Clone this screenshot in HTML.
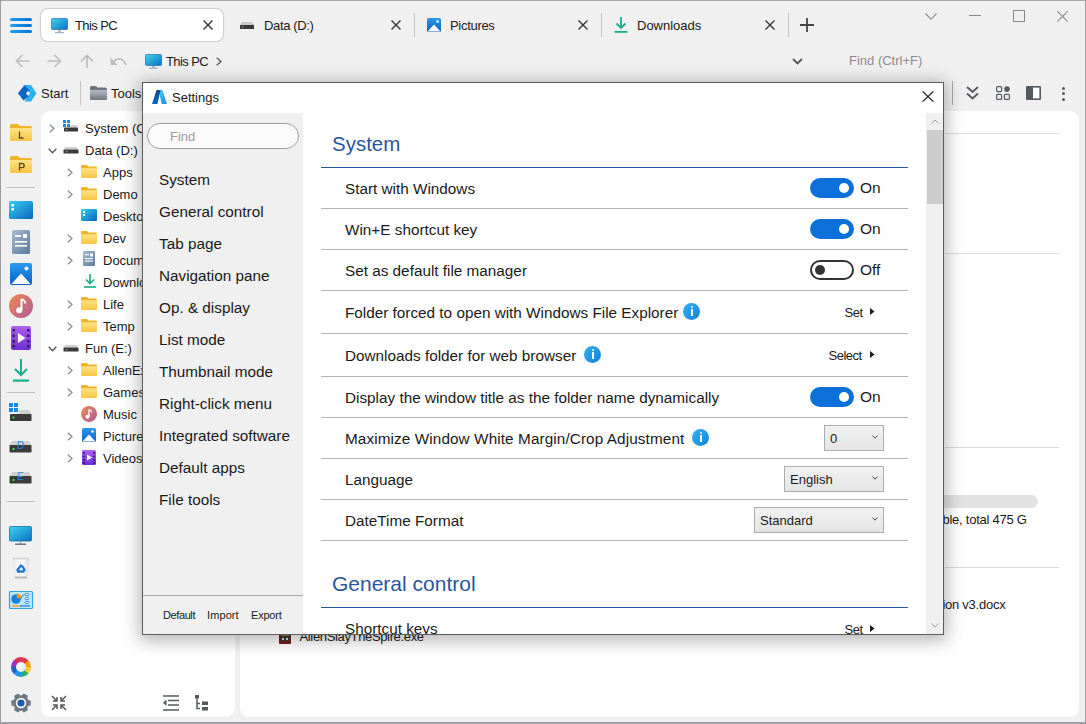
<!DOCTYPE html>
<html><head><meta charset="utf-8">
<style>
*{margin:0;padding:0;box-sizing:border-box}
html,body{width:1086px;height:724px;overflow:hidden;background:#f0f0f0;font-family:"Liberation Sans",sans-serif;color:#1a1a1a}
.a{position:absolute}
.t{position:absolute;white-space:nowrap;line-height:1}
svg{position:absolute;overflow:visible}
.f13{font-size:13px}
.tabt{font-size:13px;top:19px;color:#1a1a1a}
.tsep{position:absolute;top:13px;width:1px;height:24px;background:#c4c4c4}
.tree{font-size:13px;color:#1a1a1a}
.navi{position:absolute;left:159px;font-size:15.3px;margin-top:0.6px;color:#1a1a1a;white-space:nowrap;line-height:1}
.gl{position:absolute;left:321px;width:587px;height:1px;background:#b4b4b8}
.lbl{position:absolute;left:345px;font-size:15.3px;color:#1a1a1a;white-space:nowrap;line-height:1}
.tog{position:absolute;left:810px;width:44px;height:20px;border-radius:10px;background:#0b70d8}
.tog::after{content:"";position:absolute;left:29px;top:5px;width:10px;height:10px;border-radius:50%;background:#fff}
.tog.off{background:#fff;border:2px solid #333}
.tog.off::after{left:3px;top:3px;width:10px;height:10px;background:#333}
.oo{position:absolute;left:860px;font-size:15.5px;margin-top:-1.5px;color:#1a1a1a;line-height:1}
.info{position:absolute;width:17px;height:17px;margin:-0.7px 0 0 -0.5px;border-radius:50%;background:linear-gradient(135deg,#34b2f2,#1580d8)}
.info::before{content:"";position:absolute;left:7.5px;top:3px;width:2px;height:2px;background:#fff;border-radius:1px}
.info::after{content:"";position:absolute;left:7.5px;top:6.5px;width:2px;height:7px;background:#fff}
.dd{position:absolute;left:824px;width:60px;height:26px;border:1px solid #acacac;background:linear-gradient(#f2f2f2,#e4e4e4)}
.ddt{position:absolute;font-size:13px;line-height:1;color:#1a1a1a;white-space:nowrap}
.ddc{position:absolute;right:5px;top:8.5px}
</style></head><body>
<!-- window frame -->
<div class="a" style="left:0;top:0;width:1086px;height:1px;background:#a8a8ac"></div>
<div class="a" style="left:0;top:0;width:1px;height:724px;background:#9c9ca0"></div>
<div class="a" style="left:1085px;top:0;width:1px;height:724px;background:#a0a0a6"></div>
<div class="a" style="left:0;top:722px;width:1086px;height:2px;background:#a0a0a6"></div>

<!-- hamburger -->
<div class="a" style="left:10px;top:18px;width:22px;height:3px;border-radius:1.5px;background:linear-gradient(90deg,#1ea0f5,#0a72d0)"></div>
<div class="a" style="left:10px;top:24px;width:22px;height:3px;border-radius:1.5px;background:linear-gradient(90deg,#1ea0f5,#0a72d0)"></div>
<div class="a" style="left:10px;top:30px;width:22px;height:3px;border-radius:1.5px;background:linear-gradient(90deg,#1ea0f5,#0a72d0)"></div>

<!-- active tab -->
<div class="a" style="left:40px;top:8px;width:184px;height:34px;background:#fff;border:1px solid #cfcfcf;border-radius:8px;box-shadow:0 0 1px rgba(0,0,0,0.12)"></div>
<svg style="left:51px;top:18px" width="17" height="16" viewBox="0 0 17 16">
 <defs><linearGradient id="mon" x1="0" y1="0" x2="1" y2="1"><stop offset="0" stop-color="#3fd6ea"/><stop offset="1" stop-color="#0a6fc6"/></linearGradient></defs>
 <rect x="0.5" y="0.5" width="16" height="11" rx="1" fill="url(#mon)" stroke="#0b5fa8" stroke-width="0.6"/>
 <rect x="7.5" y="12" width="2" height="2.5" fill="#8fa3b5"/><rect x="4" y="14" width="9" height="1.2" fill="#9fb2c4"/>
</svg>
<div class="t tabt" style="left:75px;letter-spacing:-0.6px">This PC</div>
<svg style="left:203px;top:20px" width="10" height="10" viewBox="0 0 10 10"><path d="M0.5 0.5L9.5 9.5M9.5 0.5L0.5 9.5" stroke="#333" stroke-width="1.4"/></svg>

<!-- tab 2 -->
<svg style="left:240px;top:22px" width="14" height="8" viewBox="0 0 14 8"><path d="M2 0h10l2 3H0z" fill="#c8c8c8"/><rect x="0" y="3" width="14" height="4" rx="0.5" fill="#3a3a3a"/><rect x="2" y="4.5" width="1.5" height="1.2" fill="#3fdc3f"/></svg>
<div class="t tabt" style="left:264px;letter-spacing:-0.35px">Data (D:)</div>
<svg style="left:391px;top:20px" width="10" height="10" viewBox="0 0 10 10"><path d="M0.5 0.5L9.5 9.5M9.5 0.5L0.5 9.5" stroke="#333" stroke-width="1.4"/></svg>
<div class="tsep" style="left:414px"></div>

<!-- tab 3 -->
<svg style="left:427px;top:18px" width="14" height="14" viewBox="0 0 14 14">
 <defs><linearGradient id="pic" x1="0" y1="0" x2="0" y2="1"><stop offset="0" stop-color="#2a9af0"/><stop offset="1" stop-color="#0b62c4"/></linearGradient></defs>
 <rect x="0" y="0" width="14" height="14" rx="1.5" fill="url(#pic)"/><path d="M0.5 13.5L7 6.5L13.5 13.5z" fill="#fff"/><circle cx="10.5" cy="3.5" r="1.3" fill="#fff"/></svg>
<div class="t tabt" style="left:450px;letter-spacing:-0.3px">Pictures</div>
<svg style="left:578px;top:20px" width="10" height="10" viewBox="0 0 10 10"><path d="M0.5 0.5L9.5 9.5M9.5 0.5L0.5 9.5" stroke="#333" stroke-width="1.4"/></svg>
<div class="tsep" style="left:601px"></div>

<!-- tab 4 -->
<svg style="left:614px;top:17px" width="14" height="16" viewBox="0 0 14 16"><path d="M7 0v11M2.5 6.5L7 11l4.5-4.5" stroke="#12b08a" stroke-width="1.8" fill="none"/><rect x="0.5" y="14" width="13" height="1.8" fill="#12b08a"/></svg>
<div class="t tabt" style="left:637px">Downloads</div>
<svg style="left:765px;top:20px" width="10" height="10" viewBox="0 0 10 10"><path d="M0.5 0.5L9.5 9.5M9.5 0.5L0.5 9.5" stroke="#333" stroke-width="1.4"/></svg>
<div class="tsep" style="left:788px"></div>
<svg style="left:800px;top:18px" width="14" height="14" viewBox="0 0 14 14"><path d="M7 0v14M0 7h14" stroke="#444" stroke-width="1.8"/></svg>

<!-- window controls -->
<svg style="left:925px;top:13px" width="12" height="7" viewBox="0 0 12 7"><path d="M0.5 0.5L6 6.3L11.5 0.5" stroke="#8a8a8a" stroke-width="1.1" fill="none"/></svg>
<div class="a" style="left:969px;top:15px;width:12px;height:1px;background:#8a8a8a"></div>
<div class="a" style="left:1013px;top:10px;width:12px;height:12px;border:1px solid #8a8a8a"></div>
<svg style="left:1057px;top:11px" width="11" height="11" viewBox="0 0 11 11"><path d="M0.3 0.3L10.7 10.7M10.7 0.3L0.3 10.7" stroke="#8a8a8a" stroke-width="1.1"/></svg>

<!-- address row -->
<svg style="left:15px;top:54px" width="15" height="14" viewBox="0 0 15 14"><path d="M14.5 7H1.5M7.5 1L1.5 7l6 6" stroke="#bcbcbc" stroke-width="1.6" fill="none"/></svg>
<svg style="left:47px;top:54px" width="15" height="14" viewBox="0 0 15 14"><path d="M0.5 7h13M7.5 1l6 6-6 6" stroke="#bcbcbc" stroke-width="1.6" fill="none"/></svg>
<svg style="left:80px;top:54px" width="14" height="14" viewBox="0 0 14 14"><path d="M7 14V1.5M1 7.5L7 1.5l6 6" stroke="#bcbcbc" stroke-width="1.6" fill="none"/></svg>
<svg style="left:110px;top:57px" width="17" height="9" viewBox="0 0 17 9"><path d="M0.5 0.5V8H7.5z" fill="#bcbcbc"/><path d="M2.5 6Q6 1.5 10 2T16 8" stroke="#bcbcbc" stroke-width="1.7" fill="none"/></svg>
<svg style="left:145px;top:54px" width="17" height="15" viewBox="0 0 17 15">
 <rect x="0.5" y="0.5" width="16" height="11" rx="1" fill="url(#mon)" stroke="#0b5fa8" stroke-width="0.6"/>
 <rect x="7.5" y="12" width="2" height="1.8" fill="#8fa3b5"/><rect x="4" y="13.6" width="9" height="1.2" fill="#9fb2c4"/></svg>
<div class="t f13" style="left:166px;top:55px;letter-spacing:-0.6px">This PC</div>
<svg style="left:216px;top:57px" width="6" height="9" viewBox="0 0 6 9"><path d="M0.7 0.7L5 4.5L0.7 8.3" stroke="#555" stroke-width="1.3" fill="none"/></svg>
<svg style="left:792px;top:58px" width="11" height="7" viewBox="0 0 11 7"><path d="M1 1L5.5 5.5L10 1" stroke="#505560" stroke-width="1.8" fill="none"/></svg>
<div class="t f13" style="left:849px;top:54px;color:#8c8c8c">Find (Ctrl+F)</div>

<!-- toolbar row -->
<svg style="left:17px;top:85px" width="20" height="17" viewBox="0 0 20 17">
 <defs><linearGradient id="stg" x1="0" y1="0" x2="1" y2="1"><stop offset="0" stop-color="#0b5fc4"/><stop offset="1" stop-color="#3fb8f5"/></linearGradient></defs>
 <path d="M7.5 0H14L19.5 8.3L14 16.5H7.5L12.8 8.3z" fill="#2ab0f0"/><path d="M7.5 0L12.5 6L9 8.3L11.8 11.2L6.5 15.5L1 8.3z" fill="#0a64c8"/><path d="M10.9 6L12.9 8.3L10.9 10.6L9.2 8.3z" fill="#f0f0f0"/></svg>
<div class="t f13" style="left:41px;top:87px">Start</div>
<div class="a" style="left:80px;top:81px;width:1px;height:24px;background:#c4c4c4"></div>
<svg style="left:90px;top:86px" width="17" height="14" viewBox="0 0 17 14">
 <defs><linearGradient id="tfg" x1="0" y1="0" x2="0" y2="1"><stop offset="0" stop-color="#b4bcc4"/><stop offset="1" stop-color="#6e7880"/></linearGradient></defs>
 <path d="M0 1.5Q0 0 1.5 0H6l1.5 1.5h8Q17 1.5 17 3v9.5Q17 14 15.5 14h-14Q0 14 0 12.5z" fill="#6e757c"/><path d="M0 4h17v8.5Q17 14 15.5 14h-14Q0 14 0 12.5z" fill="url(#tfg)"/></svg>
<div class="t f13" style="left:111px;top:87px">Tools</div>
<div class="a" style="left:952px;top:81px;width:1px;height:24px;background:#a8a8a8"></div>
<svg style="left:966px;top:86px" width="13" height="14" viewBox="0 0 13 14"><path d="M1 1l5.5 5L12 1M1 7.5l5.5 5 5.5-5" stroke="#555a60" stroke-width="1.9" fill="none"/></svg>
<svg style="left:996px;top:86px" width="14" height="14" viewBox="0 0 14 14"><rect x="0.6" y="0.6" width="5" height="5" rx="1" fill="none" stroke="#555a60" stroke-width="1.2"/><circle cx="11" cy="3.1" r="2.8" fill="#555a60"/><rect x="0.6" y="8.4" width="5" height="5" rx="1" fill="none" stroke="#555a60" stroke-width="1.2"/><rect x="8.4" y="8.4" width="5" height="5" rx="1" fill="none" stroke="#555a60" stroke-width="1.2"/></svg>
<svg style="left:1026px;top:86px" width="15" height="14" viewBox="0 0 15 14"><rect x="0" y="0" width="15" height="14" rx="1" fill="#555a60"/><rect x="7" y="1.6" width="6.4" height="10.8" fill="#fff"/></svg>
<div class="a" style="left:1062px;top:86.5px;width:3px;height:3px;border-radius:50%;background:#555a60"></div>
<div class="a" style="left:1062px;top:92px;width:3px;height:3px;border-radius:50%;background:#555a60"></div>
<div class="a" style="left:1062px;top:97.5px;width:3px;height:3px;border-radius:50%;background:#555a60"></div>

<!-- panes -->
<div class="a" style="left:41px;top:111px;width:194px;height:606px;background:#fff;border-radius:9px"></div>
<div class="a" style="left:240px;top:111px;width:839px;height:606px;background:#fff;border-radius:9px"></div>
<div class="a" style="left:945px;top:133px;width:114px;height:1px;background:#dcdcde"></div>
<div class="a" style="left:945px;top:253px;width:114px;height:1px;background:#dcdcde"></div>
<div class="a" style="left:945px;top:447px;width:114px;height:1px;background:#dcdcde"></div>
<div class="a" style="left:945px;top:567px;width:114px;height:1px;background:#dcdcde"></div>
<div class="a" style="left:900px;top:495px;width:138px;height:13px;border-radius:6.5px;background:#e2e2e2"></div>
<div class="t f13" style="left:910px;top:512.8px;letter-spacing:-0.25px">available, total 475 G</div>
<div class="t f13" style="left:889px;top:598.4px;letter-spacing:-0.25px">Presentation v3.docx</div>
<svg style="left:279px;top:629px" width="12" height="15" viewBox="0 0 12 15"><rect x="0" y="0" width="12" height="15" rx="1" fill="#7a1a1a"/><rect x="1.5" y="3" width="9" height="9" fill="#3a3a3a"/><rect x="2.5" y="5" width="7" height="1.5" fill="#e0b030"/><rect x="3" y="9" width="2" height="2" fill="#ddd"/><rect x="7" y="9" width="2" height="2" fill="#ddd"/></svg>
<div class="t f13" style="left:299.5px;top:630.3px;letter-spacing:-0.35px">AllenSlayTheSpire.exe</div>

<!-- tree -->
<svg style="left:49px;top:124px" width="6" height="9" viewBox="0 0 6 9"><path d="M0.8 0.8L5 4.5L0.8 8.2" stroke="#8a8a8a" stroke-width="1.2" fill="none"/></svg>
<svg style="left:63px;top:120px" width="16" height="12" viewBox="0 0 16 12"><rect x="0" y="0" width="3" height="3" fill="#1a8ae6"/><rect x="4" y="0" width="3" height="3" fill="#1a8ae6"/><rect x="0" y="4" width="3" height="3" fill="#1a8ae6"/><rect x="4" y="4" width="3" height="3" fill="#1a8ae6"/><path d="M7.5 5h6l1.5 2.5H7.5z" fill="#d0d0d0"/><rect x="1" y="7.5" width="14" height="4" rx="0.5" fill="#3a3a3a"/><rect x="3" y="9" width="1.3" height="1.2" fill="#3fdc3f"/></svg>
<div class="t tree" style="left:85px;top:122px">System (C:)</div>
<svg style="left:48px;top:148px" width="9" height="6" viewBox="0 0 9 6"><path d="M0.7 0.8L4.5 4.8L8.3 0.8" stroke="#555" stroke-width="1.3" fill="none"/></svg>
<svg style="left:63px;top:147px" width="16" height="7" viewBox="0 0 16 7"><path d="M2.5 0h11l2 2.5H0.5z" fill="#cfcfcf"/><rect x="0.5" y="2.5" width="15" height="4" rx="0.5" fill="#3a3a3a"/><rect x="3" y="4" width="1.3" height="1.2" fill="#3fdc3f"/></svg>
<div class="t tree" style="left:85px;top:144px">Data (D:)</div>
<svg style="left:67px;top:168px" width="6" height="9" viewBox="0 0 6 9"><path d="M0.8 0.8L5 4.5L0.8 8.2" stroke="#8a8a8a" stroke-width="1.2" fill="none"/></svg>
<svg style="left:81px;top:165px" width="16" height="13" viewBox="0 0 16 13"><path d="M0 1.2Q0 0 1.2 0H6l1.6 1.6h7.2Q16 1.6 16 2.8V4H0z" fill="#f0b429"/><path d="M0 3.2h16v8.6Q16 13 14.8 13H1.2Q0 13 0 11.8z" fill="url(#fold)"/></svg>
<div class="t tree" style="left:103px;top:166px">Apps</div>
<svg style="left:67px;top:190px" width="6" height="9" viewBox="0 0 6 9"><path d="M0.8 0.8L5 4.5L0.8 8.2" stroke="#8a8a8a" stroke-width="1.2" fill="none"/></svg>
<svg style="left:81px;top:187px" width="16" height="13" viewBox="0 0 16 13"><path d="M0 1.2Q0 0 1.2 0H6l1.6 1.6h7.2Q16 1.6 16 2.8V4H0z" fill="#f0b429"/><path d="M0 3.2h16v8.6Q16 13 14.8 13H1.2Q0 13 0 11.8z" fill="url(#fold)"/></svg>
<div class="t tree" style="left:103px;top:188px">Demo</div>
<svg style="left:81px;top:209px" width="16" height="12" viewBox="0 0 16 12"><rect x="0" y="0" width="16" height="12" rx="1" fill="url(#desk)"/><rect x="2" y="2" width="2" height="2" fill="#fff"/><rect x="2" y="5" width="2" height="2" fill="#fff"/></svg>
<div class="t tree" style="left:103px;top:210px">Desktop</div>
<svg style="left:67px;top:234px" width="6" height="9" viewBox="0 0 6 9"><path d="M0.8 0.8L5 4.5L0.8 8.2" stroke="#8a8a8a" stroke-width="1.2" fill="none"/></svg>
<svg style="left:81px;top:231px" width="16" height="13" viewBox="0 0 16 13"><path d="M0 1.2Q0 0 1.2 0H6l1.6 1.6h7.2Q16 1.6 16 2.8V4H0z" fill="#f0b429"/><path d="M0 3.2h16v8.6Q16 13 14.8 13H1.2Q0 13 0 11.8z" fill="url(#fold)"/></svg>
<div class="t tree" style="left:103px;top:232px">Dev</div>
<svg style="left:67px;top:256px" width="6" height="9" viewBox="0 0 6 9"><path d="M0.8 0.8L5 4.5L0.8 8.2" stroke="#8a8a8a" stroke-width="1.2" fill="none"/></svg>
<svg style="left:83px;top:251px" width="12" height="15" viewBox="0 0 12 15"><rect x="0" y="0" width="12" height="15" rx="1" fill="url(#docg)"/><rect x="2" y="3" width="4" height="1.2" fill="#fff"/><rect x="7" y="2.5" width="3" height="3" fill="#fff"/><rect x="2" y="7" width="8" height="1.1" fill="#fff"/><rect x="2" y="9.5" width="8" height="1.1" fill="#fff"/></svg>
<div class="t tree" style="left:103px;top:254px">Documents</div>
<svg style="left:84px;top:274px" width="12" height="14" viewBox="0 0 12 14"><path d="M6 0v9.5M2 5.5L6 9.5l4-4" stroke="#12b08a" stroke-width="1.6" fill="none"/><rect x="0" y="12.2" width="12" height="1.6" fill="#12b08a"/></svg>
<div class="t tree" style="left:103px;top:276px">Downloads</div>
<svg style="left:67px;top:300px" width="6" height="9" viewBox="0 0 6 9"><path d="M0.8 0.8L5 4.5L0.8 8.2" stroke="#8a8a8a" stroke-width="1.2" fill="none"/></svg>
<svg style="left:81px;top:297px" width="16" height="13" viewBox="0 0 16 13"><path d="M0 1.2Q0 0 1.2 0H6l1.6 1.6h7.2Q16 1.6 16 2.8V4H0z" fill="#f0b429"/><path d="M0 3.2h16v8.6Q16 13 14.8 13H1.2Q0 13 0 11.8z" fill="url(#fold)"/></svg>
<div class="t tree" style="left:103px;top:298px">Life</div>
<svg style="left:67px;top:322px" width="6" height="9" viewBox="0 0 6 9"><path d="M0.8 0.8L5 4.5L0.8 8.2" stroke="#8a8a8a" stroke-width="1.2" fill="none"/></svg>
<svg style="left:81px;top:319px" width="16" height="13" viewBox="0 0 16 13"><path d="M0 1.2Q0 0 1.2 0H6l1.6 1.6h7.2Q16 1.6 16 2.8V4H0z" fill="#f0b429"/><path d="M0 3.2h16v8.6Q16 13 14.8 13H1.2Q0 13 0 11.8z" fill="url(#fold)"/></svg>
<div class="t tree" style="left:103px;top:320px">Temp</div>
<svg style="left:48px;top:346px" width="9" height="6" viewBox="0 0 9 6"><path d="M0.7 0.8L4.5 4.8L8.3 0.8" stroke="#555" stroke-width="1.3" fill="none"/></svg>
<svg style="left:63px;top:345px" width="16" height="7" viewBox="0 0 16 7"><path d="M2.5 0h11l2 2.5H0.5z" fill="#cfcfcf"/><rect x="0.5" y="2.5" width="15" height="4" rx="0.5" fill="#3a3a3a"/><rect x="3" y="4" width="1.3" height="1.2" fill="#3fdc3f"/></svg>
<div class="t tree" style="left:85px;top:342px">Fun (E:)</div>
<svg style="left:67px;top:366px" width="6" height="9" viewBox="0 0 6 9"><path d="M0.8 0.8L5 4.5L0.8 8.2" stroke="#8a8a8a" stroke-width="1.2" fill="none"/></svg>
<svg style="left:81px;top:363px" width="16" height="13" viewBox="0 0 16 13"><path d="M0 1.2Q0 0 1.2 0H6l1.6 1.6h7.2Q16 1.6 16 2.8V4H0z" fill="#f0b429"/><path d="M0 3.2h16v8.6Q16 13 14.8 13H1.2Q0 13 0 11.8z" fill="url(#fold)"/></svg>
<div class="t tree" style="left:103px;top:364px">AllenExplorer</div>
<svg style="left:67px;top:388px" width="6" height="9" viewBox="0 0 6 9"><path d="M0.8 0.8L5 4.5L0.8 8.2" stroke="#8a8a8a" stroke-width="1.2" fill="none"/></svg>
<svg style="left:81px;top:385px" width="16" height="13" viewBox="0 0 16 13"><path d="M0 1.2Q0 0 1.2 0H6l1.6 1.6h7.2Q16 1.6 16 2.8V4H0z" fill="#f0b429"/><path d="M0 3.2h16v8.6Q16 13 14.8 13H1.2Q0 13 0 11.8z" fill="url(#fold)"/></svg>
<div class="t tree" style="left:103px;top:386px">Games</div>
<svg style="left:81px;top:406px" width="16" height="16" viewBox="0 0 16 16"><circle cx="8" cy="8" r="8" fill="url(#mus)"/><path d="M8 3.5v7" stroke="#fff" stroke-width="1.4"/><circle cx="6.5" cy="10.8" r="2" fill="#fff"/><path d="M8 3.5q2.5 0.8 2.8 3" stroke="#fff" stroke-width="1.3" fill="none"/></svg>
<div class="t tree" style="left:103px;top:408px">Music</div>
<svg style="left:67px;top:432px" width="6" height="9" viewBox="0 0 6 9"><path d="M0.8 0.8L5 4.5L0.8 8.2" stroke="#8a8a8a" stroke-width="1.2" fill="none"/></svg>
<svg style="left:82px;top:428px" width="14" height="14" viewBox="0 0 14 14"><rect x="0" y="0" width="14" height="14" rx="1.5" fill="url(#pic)"/><path d="M0.5 13.5L7 6.5L13.5 13.5z" fill="#fff"/><circle cx="10.5" cy="3.5" r="1.3" fill="#fff"/></svg>
<div class="t tree" style="left:103px;top:430px">Pictures</div>
<svg style="left:67px;top:454px" width="6" height="9" viewBox="0 0 6 9"><path d="M0.8 0.8L5 4.5L0.8 8.2" stroke="#8a8a8a" stroke-width="1.2" fill="none"/></svg>
<svg style="left:82px;top:450px" width="14" height="15" viewBox="0 0 14 15"><rect x="0" y="0" width="14" height="15" rx="1.5" fill="url(#vidg)"/><rect x="1" y="2" width="1.8" height="1.8" fill="#3a1a70"/><rect x="1" y="5.5" width="1.8" height="1.8" fill="#3a1a70"/><rect x="1" y="9" width="1.8" height="1.8" fill="#3a1a70"/><rect x="1" y="12" width="1.8" height="1.8" fill="#3a1a70"/><rect x="11.2" y="2" width="1.8" height="1.8" fill="#3a1a70"/><rect x="11.2" y="5.5" width="1.8" height="1.8" fill="#3a1a70"/><rect x="11.2" y="9" width="1.8" height="1.8" fill="#3a1a70"/><rect x="11.2" y="12" width="1.8" height="1.8" fill="#3a1a70"/><path d="M5 4.5L10 7.5L5 10.5z" fill="#fff"/></svg>
<div class="t tree" style="left:103px;top:452px">Videos</div>


<!-- sidebar -->
<svg style="left:0;top:0;width:0;height:0"><defs>
<linearGradient id="fold" x1="0" y1="0" x2="0" y2="1"><stop offset="0" stop-color="#ffe28a"/><stop offset="1" stop-color="#f8c440"/></linearGradient>
<linearGradient id="desk" x1="0" y1="0" x2="1" y2="1"><stop offset="0" stop-color="#36d0ec"/><stop offset="1" stop-color="#0a64c0"/></linearGradient>
<linearGradient id="docg" x1="0" y1="0" x2="1" y2="1"><stop offset="0" stop-color="#a8bcd4"/><stop offset="1" stop-color="#5c7898"/></linearGradient>
<linearGradient id="mus" x1="0" y1="0" x2="1" y2="1"><stop offset="0" stop-color="#f08a50"/><stop offset="1" stop-color="#b05a9a"/></linearGradient>
<linearGradient id="vidg" x1="0" y1="0" x2="0" y2="1"><stop offset="0" stop-color="#b060f0"/><stop offset="1" stop-color="#6a30d0"/></linearGradient>
<linearGradient id="grayd" x1="0" y1="0" x2="0" y2="1"><stop offset="0" stop-color="#e0e0e0"/><stop offset="1" stop-color="#c0c0c0"/></linearGradient>
</defs></svg>
<!-- sidebar -->
<svg style="left:10px;top:124px" width="22" height="17" viewBox="0 0 22 17"><path d="M0 1.5Q0 0 1.5 0H8l2 2h10.5Q22 2 22 3.5V5H0z" fill="#f0b429"/><path d="M0 4h22v11.5Q22 17 20.5 17h-19Q0 17 0 15.5z" fill="url(#fold)"/><path d="M9.5 7.5v6.5h4" stroke="#5a4a2a" stroke-width="1.3" fill="none"/></svg>
<svg style="left:10px;top:156px" width="22" height="17" viewBox="0 0 22 17"><path d="M0 1.5Q0 0 1.5 0H8l2 2h10.5Q22 2 22 3.5V5H0z" fill="#f0b429"/><path d="M0 4h22v11.5Q22 17 20.5 17h-19Q0 17 0 15.5z" fill="url(#fold)"/><path d="M9.5 14.5V7.5h2.5q2.2 0 2.2 2.1t-2.2 2.1H9.5" stroke="#5a4a2a" stroke-width="1.3" fill="none"/></svg>
<div class="a" style="left:7px;top:187px;width:28px;height:1px;background:#bcbcbc"></div>
<svg style="left:9px;top:201px" width="24" height="18" viewBox="0 0 24 18"><rect x="0" y="0" width="24" height="18" rx="1.5" fill="url(#desk)"/><rect x="2.5" y="3" width="2.5" height="2.5" fill="#fff"/><rect x="2.5" y="7" width="2.5" height="2.5" fill="#fff"/></svg>
<svg style="left:12px;top:230px" width="18" height="24" viewBox="0 0 18 24"><rect x="0" y="0" width="18" height="24" rx="1.5" fill="url(#docg)"/><rect x="3" y="5" width="6" height="1.8" fill="#fff"/><rect x="11" y="4" width="4" height="4" fill="#fff"/><rect x="3" y="11" width="12" height="1.6" fill="#fff"/><rect x="3" y="15" width="12" height="1.6" fill="#fff"/></svg>
<svg style="left:10px;top:263px" width="22" height="22" viewBox="0 0 22 22"><rect x="0" y="0" width="22" height="22" rx="2" fill="url(#pic)"/><path d="M1.5 21L11 10.5L20.5 21z" fill="#fff"/><circle cx="16.5" cy="5.5" r="2" fill="#fff"/></svg>
<svg style="left:9px;top:294px" width="24" height="24" viewBox="0 0 24 24"><circle cx="12" cy="12" r="12" fill="url(#mus)"/><path d="M12.5 5v11" stroke="#fff" stroke-width="2"/><circle cx="10.2" cy="16.2" r="3" fill="#fff"/><path d="M12.5 5q3.5 1 4 4.5" stroke="#fff" stroke-width="1.8" fill="none"/></svg>
<svg style="left:11px;top:326px" width="20" height="24" viewBox="0 0 20 24"><rect x="0" y="0" width="20" height="24" rx="2" fill="url(#vidg)"/><rect x="1.5" y="3" width="2.5" height="2.5" fill="#3a1a70"/><rect x="1.5" y="8.5" width="2.5" height="2.5" fill="#3a1a70"/><rect x="1.5" y="14" width="2.5" height="2.5" fill="#3a1a70"/><rect x="1.5" y="19" width="2.5" height="2.5" fill="#3a1a70"/><rect x="16" y="3" width="2.5" height="2.5" fill="#3a1a70"/><rect x="16" y="8.5" width="2.5" height="2.5" fill="#3a1a70"/><rect x="16" y="14" width="2.5" height="2.5" fill="#3a1a70"/><rect x="16" y="19" width="2.5" height="2.5" fill="#3a1a70"/><path d="M7 7L14.5 12L7 17z" fill="#fff"/></svg>
<svg style="left:13px;top:359px" width="16" height="23" viewBox="0 0 16 23"><path d="M8 0v16M2 10l6 6 6-6" stroke="#12b08a" stroke-width="2" fill="none"/><rect x="0" y="20.5" width="16" height="2.2" fill="#12b08a"/></svg>
<div class="a" style="left:7px;top:392px;width:28px;height:1px;background:#bcbcbc"></div>
<svg style="left:9px;top:403px" width="23" height="18" viewBox="0 0 23 18"><rect x="0" y="0" width="4" height="4" fill="#1a8ae6"/><rect x="5" y="0" width="4" height="4" fill="#1a8ae6"/><rect x="0" y="5" width="4" height="4" fill="#1a8ae6"/><rect x="5" y="5" width="4" height="4" fill="#1a8ae6"/><path d="M9.5 7h10.5l2.5 4H9.5z" fill="#d0d0d0"/><rect x="1" y="11" width="21.5" height="7" rx="0.8" fill="#3a3a3a"/><rect x="3.5" y="13.5" width="2" height="2" fill="#3fdc3f"/></svg>
<svg style="left:9px;top:440px" width="23" height="13" viewBox="0 0 23 13"><path d="M3 1h17l2.5 4H0.5z" fill="#d0d0d0"/><rect x="0.5" y="5" width="22" height="7.5" rx="0.8" fill="#3a3a3a"/><rect x="3.5" y="8" width="2" height="2" fill="#3fdc3f"/><text x="11.5" y="9" font-family="Liberation Sans" font-size="10" fill="#1a8ae6" text-anchor="middle">D</text></svg>
<svg style="left:9px;top:471px" width="23" height="13" viewBox="0 0 23 13"><path d="M3 1h17l2.5 4H0.5z" fill="#d0d0d0"/><rect x="0.5" y="5" width="22" height="7.5" rx="0.8" fill="#3a3a3a"/><rect x="3.5" y="8" width="2" height="2" fill="#3fdc3f"/><text x="11.5" y="9" font-family="Liberation Sans" font-size="10" fill="#1a8ae6" text-anchor="middle">E</text></svg>
<div class="a" style="left:7px;top:501px;width:28px;height:1px;background:#bcbcbc"></div>
<svg style="left:9px;top:526px" width="23" height="19" viewBox="0 0 23 19"><rect x="0.5" y="0.5" width="22" height="14.5" rx="1" fill="url(#mon)" stroke="#0b5fa8" stroke-width="0.7"/><rect x="10.5" y="15.5" width="2" height="2" fill="#8fa3b5"/><rect x="6" y="17.5" width="11" height="1.5" fill="#6a7a8a"/></svg>
<svg style="left:12px;top:557px" width="18" height="22" viewBox="0 0 18 22"><defs><linearGradient id="binb" x1="0" y1="0" x2="1" y2="0"><stop offset="0" stop-color="#e6e6e6"/><stop offset="0.5" stop-color="#ffffff"/><stop offset="1" stop-color="#dcdcdc"/></linearGradient></defs><path d="M0.5 1.5h17l-2 20h-13z" fill="url(#binb)"/><path d="M1 1.5h16" stroke="#d8d8d8" stroke-width="2"/><rect x="3" y="19.5" width="12" height="2" fill="#b8b8b8"/><path d="M9 8.5l-3.5 4.5M6 14.5h5.5M12.5 13l-2-3.5" stroke="#1a7ad8" stroke-width="2.4" stroke-linecap="round"/></svg>
<svg style="left:9px;top:591px" width="24" height="18" viewBox="0 0 24 18"><rect x="0.5" y="0.5" width="23" height="17" rx="1" fill="#c2e6fb" stroke="#2ea4f0" stroke-width="1.2"/><circle cx="7" cy="8" r="4.8" fill="#1a82dc"/><path d="M7.8 2.6v4.6h4.6A4.6 4.6 0 0 0 7.8 2.6z" fill="#f59a10"/><path d="M12 7.5q1.5-4 3.5-4" stroke="#1a5fb0" stroke-width="0.9" fill="none"/><ellipse cx="18" cy="3.5" rx="2" ry="1.2" fill="#fff" stroke="#1a82dc" stroke-width="0.9"/><ellipse cx="18" cy="7.5" rx="2" ry="1.2" fill="#fff" stroke="#1a82dc" stroke-width="0.9"/><ellipse cx="18" cy="11.5" rx="2" ry="1.2" fill="#fff" stroke="#1a82dc" stroke-width="0.9"/><rect x="3" y="14.3" width="8" height="1.3" fill="#f59a10"/><rect x="11" y="14.3" width="10" height="1.3" fill="#1a82dc"/></svg>
<div class="a" style="left:11px;top:657px;width:20px;height:20px;border-radius:50%;background:conic-gradient(#e23a4a 0deg 45deg,#f5a210 45deg 90deg,#ffc830 90deg 135deg,#22b062 135deg 180deg,#1a96e6 180deg 225deg,#1f5fc8 225deg 270deg,#9236c8 270deg 315deg,#d8305a 315deg 360deg)"></div><div class="a" style="left:16px;top:662px;width:10px;height:10px;border-radius:50%;background:radial-gradient(circle at 40% 35%,#ffffff,#dcdcdc)"></div>
<svg style="left:11px;top:693px" width="20" height="20" viewBox="0 0 20 20"><path d="M17.23 7.08 L19.70 7.58 L19.70 12.42 L17.23 12.92 L16.15 14.80 L16.95 17.19 L12.76 19.61 L11.09 17.72 L8.91 17.72 L7.24 19.61 L3.05 17.19 L3.85 14.80 L2.77 12.92 L0.30 12.42 L0.30 7.58 L2.77 7.08 L3.85 5.20 L3.05 2.81 L7.24 0.39 L8.91 2.28 L11.09 2.28 L12.76 0.39 L16.95 2.81 L16.15 5.20Z" fill="#6e7882"/><circle cx="10" cy="10" r="5.2" fill="#fff"/><circle cx="10" cy="10" r="3.6" fill="#1a5fae"/></svg>
<!-- nav pane bottom icons -->
<svg style="left:51px;top:695px" width="16" height="16" viewBox="0 0 16 16"><path d="M1 1l5 5M6 2v4H2M15 1l-5 5M10 2v4h4M1 15l5-5M6 14v-4H2M15 15l-5-5M10 14v-4h4" stroke="#555a60" stroke-width="1.5" fill="none"/></svg>
<svg style="left:163px;top:695px" width="16" height="16" viewBox="0 0 16 16"><path d="M0 1h16M5 5.5h11M5 10h11M0 15h16" stroke="#555a60" stroke-width="1.5"/><path d="M3.5 4.5v6.5L0 7.75z" fill="#555a60"/></svg>
<svg style="left:195px;top:695px" width="16" height="16" viewBox="0 0 16 16"><rect x="0" y="0" width="4" height="3.5" fill="#555a60"/><path d="M2 3.5v10h3M2 8.5h3" stroke="#555a60" stroke-width="1.5" fill="none"/><rect x="7" y="6.5" width="6" height="3.5" fill="#555a60"/><rect x="7" y="12" width="6" height="3.5" fill="#555a60"/></svg>


<!-- settings dialog -->
<div class="a" style="left:142px;top:82px;width:802px;height:553px;background:#fff;border:1px solid #5c5c5c;box-shadow:0 3px 16px 3px rgba(0,0,0,0.28)"></div>
<svg style="left:152px;top:90px" width="15" height="14" viewBox="0 0 15 14">
 <defs><linearGradient id="az1" x1="0" y1="0" x2="0" y2="1"><stop offset="0" stop-color="#114a8b"/><stop offset="1" stop-color="#0669bc"/></linearGradient><linearGradient id="az2" x1="0" y1="0" x2="0" y2="1"><stop offset="0" stop-color="#3ccbf4"/><stop offset="1" stop-color="#2892df"/></linearGradient></defs>
 <path d="M6.5 0H10.5L15 14H9.8z" fill="url(#az2)"/><path d="M4.5 0H8.6L5.4 14H0z" fill="url(#az1)"/></svg>
<div class="t f13" style="left:172px;top:91px">Settings</div>
<svg style="left:922px;top:91px" width="12" height="11" viewBox="0 0 12 11"><path d="M0.6 0.4L11.4 10.6M11.4 0.4L0.6 10.6" stroke="#1a1a1a" stroke-width="1.3"/></svg>

<div class="a" style="left:143px;top:113px;width:160px;height:521px;background:#f0f0f0"></div>
<div class="a" style="left:147px;top:123px;width:152px;height:26px;border:1px solid #a0a0a4;border-radius:13px;background:#fafafa"></div>
<div class="t f13" style="left:170px;top:129.5px;color:#9a9a9a">Find</div>
<div class="navi" style="top:171.5px">System</div>
<div class="navi" style="top:203.5px">General control</div>
<div class="navi" style="top:235.5px">Tab page</div>
<div class="navi" style="top:267.5px">Navigation pane</div>
<div class="navi" style="top:299.5px">Op. &amp; display</div>
<div class="navi" style="top:331.5px">List mode</div>
<div class="navi" style="top:363.5px">Thumbnail mode</div>
<div class="navi" style="top:395.5px">Right-click menu</div>
<div class="navi" style="top:427.5px">Integrated software</div>
<div class="navi" style="top:459.5px">Default apps</div>
<div class="navi" style="top:491.5px">File tools</div>
<div class="a" style="left:143px;top:595px;width:160px;height:1px;background:#a8a8ac"></div>
<div class="t" style="left:163px;top:610px;font-size:11px;letter-spacing:-0.4px">Default</div>
<div class="t" style="left:207px;top:610px;font-size:11px;letter-spacing:0.1px">Import</div>
<div class="t" style="left:251px;top:610px;font-size:11px;letter-spacing:-0.2px">Export</div>

<!-- content (clipped) -->
<div class="a" style="left:303px;top:113px;width:624px;height:521px;overflow:hidden;background:#fff">
 <div style="position:absolute;left:-303px;top:-113px;width:1086px;height:724px">
  <div class="t" style="left:332px;top:134px;font-size:20.5px;color:#2a55a0">System</div>
  <div class="a" style="left:321px;top:167px;width:587px;height:1px;background:#2a55a0"></div>
  <div class="lbl" style="top:181px">Start with Windows</div>
  <div class="tog" style="top:178px"></div><div class="oo" style="top:181.5px">On</div>
  <div class="gl" style="top:208px"></div>
  <div class="lbl" style="top:222px">Win+E shortcut key</div>
  <div class="tog" style="top:219px"></div><div class="oo" style="top:222.5px">On</div>
  <div class="gl" style="top:249px"></div>
  <div class="lbl" style="top:263px">Set as default file manager</div>
  <div class="tog off" style="top:260px"></div><div class="oo" style="top:263.5px">Off</div>
  <div class="gl" style="top:290px"></div>
  <div class="lbl" style="top:304.7px">Folder forced to open with Windows File Explorer</div>
  <div class="info" style="left:683.5px;top:303.5px"></div>
  <div class="t f13" style="left:844.5px;top:306px;letter-spacing:-0.4px">Set</div>
  <svg style="left:870px;top:308px" width="5" height="7" viewBox="0 0 5 7"><path d="M0 0L4.5 3.5L0 7z" fill="#1a1a1a"/></svg>
  <div class="gl" style="top:333px"></div>
  <div class="lbl" style="top:347.7px">Downloads folder for web browser</div>
  <div class="info" style="left:584.5px;top:346.5px"></div>
  <div class="t f13" style="left:828.5px;top:349px;letter-spacing:-0.5px">Select</div>
  <svg style="left:870px;top:351px" width="5" height="7" viewBox="0 0 5 7"><path d="M0 0L4.5 3.5L0 7z" fill="#1a1a1a"/></svg>
  <div class="gl" style="top:376px"></div>
  <div class="lbl" style="top:390px">Display the window title as the folder name dynamically</div>
  <div class="tog" style="top:387px"></div><div class="oo" style="top:390.5px">On</div>
  <div class="gl" style="top:417px"></div>
  <div class="lbl" style="top:430.7px;letter-spacing:0.1px">Maximize Window White Margin/Crop Adjustment</div>
  <div class="info" style="left:692.5px;top:429.5px"></div>
  <div class="dd" style="left:824px;top:425px;width:60px"><div class="ddt" style="left:5px;top:6px">0</div><svg class="ddc" width="6" height="4" viewBox="0 0 6 4"><path d="M0.5 0.5L3 3.2L5.5 0.5" stroke="#444" stroke-width="1" fill="none"/></svg></div>
  <div class="gl" style="top:458px"></div>
  <div class="lbl" style="top:472px">Language</div>
  <div class="dd" style="left:784px;top:466px;width:100px"><div class="ddt" style="left:5px;top:6px">English</div><svg class="ddc" width="6" height="4" viewBox="0 0 6 4"><path d="M0.5 0.5L3 3.2L5.5 0.5" stroke="#444" stroke-width="1" fill="none"/></svg></div>
  <div class="gl" style="top:499px"></div>
  <div class="lbl" style="top:513.2px">DateTime Format</div>
  <div class="dd" style="left:754px;top:507px;width:130px"><div class="ddt" style="left:5px;top:6px">Standard</div><svg class="ddc" width="6" height="4" viewBox="0 0 6 4"><path d="M0.5 0.5L3 3.2L5.5 0.5" stroke="#444" stroke-width="1" fill="none"/></svg></div>
  <div class="gl" style="top:540px"></div>
  <div class="t" style="left:332px;top:573px;font-size:21px;color:#2a55a0">General control</div>
  <div class="a" style="left:321px;top:607px;width:587px;height:1px;background:#2a55a0"></div>
  <div class="lbl" style="top:621px">Shortcut keys</div>
  <div class="t f13" style="left:844.5px;top:623px;letter-spacing:-0.4px">Set</div>
  <svg style="left:870px;top:625px" width="5" height="7" viewBox="0 0 5 7"><path d="M0 0L4.5 3.5L0 7z" fill="#1a1a1a"/></svg>
 </div>
</div>
<!-- scrollbar -->
<div class="a" style="left:926px;top:113px;width:17px;height:521px;background:#f0f0f0"></div>
<div class="a" style="left:927px;top:130px;width:16px;height:74px;background:#cdcdcd"></div>
<svg style="left:931px;top:119px" width="8" height="5" viewBox="0 0 8 5"><path d="M0.5 4.5L4 1L7.5 4.5" stroke="#a0a0a0" stroke-width="1" fill="none"/></svg>
<svg style="left:931px;top:623px" width="8" height="5" viewBox="0 0 8 5"><path d="M0.5 0.5L4 4L7.5 0.5" stroke="#a0a0a0" stroke-width="1" fill="none"/></svg>
</body></html>
